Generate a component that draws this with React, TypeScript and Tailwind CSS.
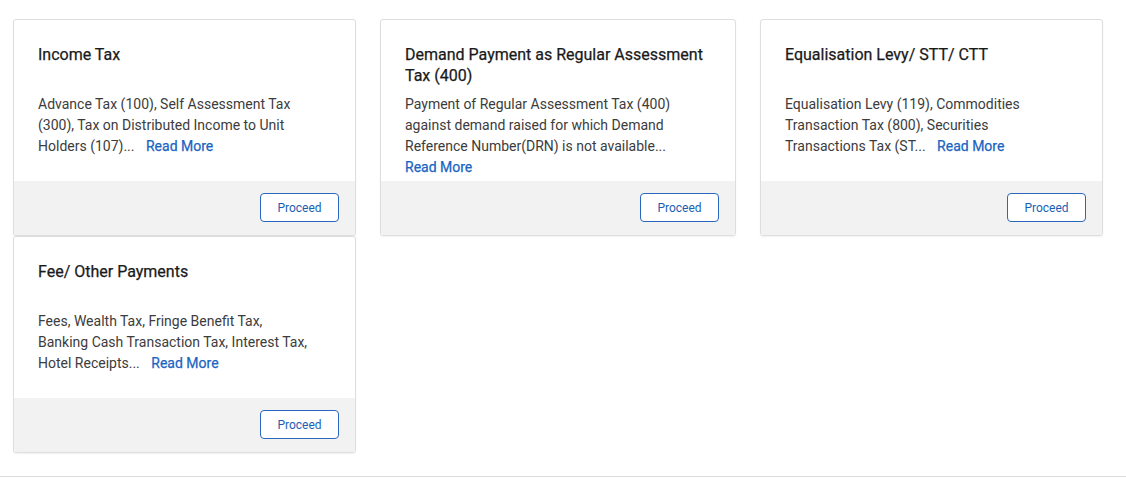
type Service = {
  title: string
  desc: string
  width: string
}

const services: Service[] = [
  {
    title: 'Income Tax',
    desc: 'Advance Tax (100), Self Assessment Tax (300), Tax on Distributed Income to Unit Holders (107)...',
    width: 'w-[343px]',
  },
  {
    title: 'Demand Payment as Regular Assessment Tax (400)',
    desc: 'Payment of Regular Assessment Tax (400) against demand raised for which Demand Reference Number(DRN) is not available...',
    width: 'w-[356px]',
  },
  {
    title: 'Equalisation Levy/ STT/ CTT',
    desc: 'Equalisation Levy (119), Commodities Transaction Tax (800), Securities Transactions Tax (ST...',
    width: 'w-[343px]',
  },
  {
    title: 'Fee/ Other Payments',
    desc: 'Fees, Wealth Tax, Fringe Benefit Tax, Banking Cash Transaction Tax, Interest Tax, Hotel Receipts...',
    width: 'w-[343px]',
  },
]

const ServiceCard = ({ service }: { service: Service }) => {
  return (
    <div className={`${service.width} flex flex-col rounded-[3px] border border-[#dedede] bg-white shadow-[0_1px_2px_rgba(0,0,0,0.06)] overflow-hidden`}>
      <div className="h-[161px] px-6 pt-6">
        <h3 className="min-h-[42px] text-[16px] leading-[21px] font-normal text-[#1a1a1a] [-webkit-text-stroke:0.25px_#1a1a1a]">
          {service.title}
        </h3>
        <p className="mt-2 w-[273px] text-[14px] leading-[21px] text-[#3c3c3c]">
          <span className="mr-2">{service.desc}</span>{' '}
          <a href="#" className="text-[#1a64c2] [-webkit-text-stroke:0.25px_#1a64c2]">Read More</a>
        </p>
      </div>
      <div className="flex justify-end bg-[#f2f2f2] pt-3 pb-[13px] pr-4">
        <button className="h-[29px] w-[79px] rounded-[4px] border border-[#2a68bd] bg-white text-[12px] text-[#1a5fb4]">
          Proceed
        </button>
      </div>
    </div>
  )
}

const App = () => {
  return (
    <div className="w-[1126px] h-[478px] bg-white font-['Roboto',sans-serif]">
      <div className="h-[477px] border-b border-[#dcdcdc] pl-[13px] pt-[19px]">
        <div className="flex flex-wrap gap-x-6">
          {services.map(s => (
            <ServiceCard key={s.title} service={s} />
          ))}
        </div>
      </div>
    </div>
  )
}

export default App
